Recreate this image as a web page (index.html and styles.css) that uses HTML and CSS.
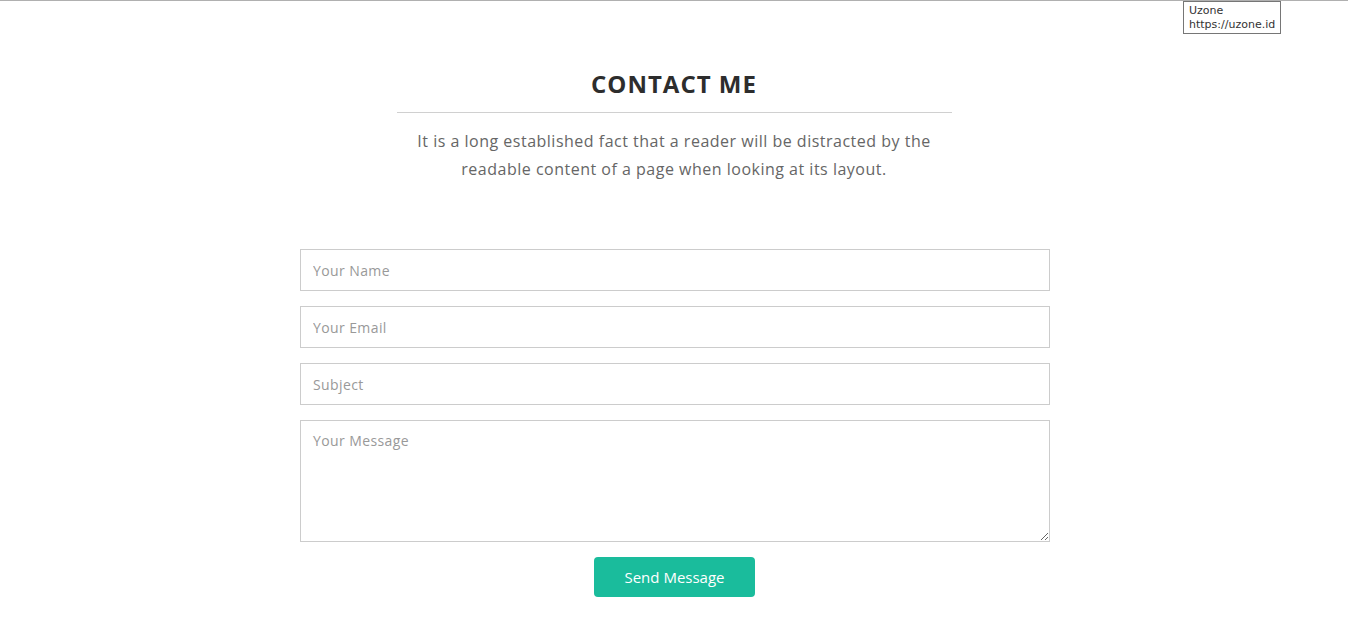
FILE: index.html
```html
<!DOCTYPE html>
<html lang="en">
<head>
  <meta charset="UTF-8">
  <meta name="viewport" content="width=device-width, initial-scale=1.0">
  <title>Contact Me</title>
  <link rel="stylesheet" href="styles.css">
</head>
<body>
  <section class="contact">
    <div class="section-title">
      <h2>CONTACT ME</h2>
      <hr class="divider">
      <p>It is a long established fact that a reader will be distracted by the<br>readable content of a page when looking at its layout.</p>
    </div>

    <form class="contact-form">
      <input type="text" placeholder="Your Name">
      <input type="email" placeholder="Your Email">
      <input type="text" placeholder="Subject">
      <textarea placeholder="Your Message"></textarea>
      <button type="button">Send Message</button>
    </form>
  </section>

  <div class="tooltip">Uzone<br>https://uzone.id</div>
</body>
</html>
```

FILE: styles.css
```css
body {
  margin: 0;
  font-family: "Open Sans", Arial, sans-serif;
  color: #333;
  background: #fff;
  border-top: 1px solid #b0b0b0;
}
.contact {
  width: 750px;
  margin: 0 auto;
  padding-top: 68px;
}
.section-title {
  text-align: center;
}
.section-title h2 {
  margin: 0;
  font-size: 24px;
  line-height: 30px;
  font-weight: 700;
  color: #2d2d2d;
  letter-spacing: 1px;
}
.divider {
  width: 555px;
  margin: 13px auto 14px;
  border: none;
  border-top: 1px solid #d0d0d0;
}
.section-title p {
  margin: 0;
  font-size: 16px;
  line-height: 28px;
  color: #666;
  letter-spacing: 0.5px;
}
.contact-form {
  width: 750px;
  margin: 66px 0 0 1px;
  display: flex;
  flex-direction: column;
  gap: 15px;
}
input, textarea {
  width: 100%;
  box-sizing: border-box;
  border: 1px solid #ccc;
  border-radius: 0;
  padding: 0 12px;
  font-family: inherit;
  font-size: 14px;
  letter-spacing: 0.4px;
  color: #555;
}
input {
  height: 42px;
}
textarea {
  height: 122px;
  padding-top: 10px;
  resize: vertical;
}
input::placeholder, textarea::placeholder {
  color: #999;
}
button {
  align-self: center;
  width: 161px;
  height: 40px;
  margin-left: -1px;
  background-color: #1abc9c;
  color: #fff;
  border: none;
  border-radius: 4px;
  font-family: inherit;
  font-size: 15px;
  cursor: pointer;
}
.tooltip {
  position: absolute;
  top: 1px;
  left: 1183px;
  padding: 2px 5px 1px;
  border: 1px solid #767676;
  background: #fff;
  font-family: "DejaVu Sans", sans-serif;
  font-size: 11px;
  line-height: 14px;
  color: #333;
}
```
